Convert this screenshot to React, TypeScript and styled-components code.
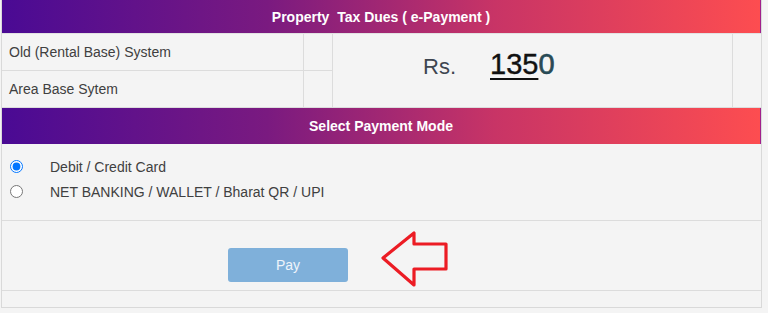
import React from "react";
import styled, { createGlobalStyle } from "styled-components";

const Global = createGlobalStyle`
  html, body { margin: 0; padding: 0; background: #f4f4f4; }
  body { font-family: "Liberation Sans", Arial, sans-serif; }
  * { box-sizing: border-box; }
`;

const Panel = styled.div`
  margin-left: 1px;
  width: 761px;
  border: 1px solid #d9d9d9;
  border-top: none;
  background: #f4f4f4;
`;

const Banner = styled.div<{ $h: number }>`
  height: ${(p) => p.$h}px;
  display: flex;
  align-items: center;
  justify-content: center;
  background: linear-gradient(90deg, #4a0a94 0%, #7a1a80 35%, #c83466 65%, #fd4d50 100%);
  border-right: 1px solid #a0208c;
  color: #ffffff;
  font-weight: bold;
  font-size: 14px;
`;

const DuesGrid = styled.div`
  display: grid;
  grid-template-columns: 302px 29px 400px 28px;
  grid-template-rows: 37px 37px;
  border-top: 1px solid #e2e2e2;
`;

const Cell = styled.div<{ $col: number; $row: string; $last?: boolean }>`
  grid-column: ${(p) => p.$col};
  grid-row: ${(p) => p.$row};
  border-right: ${(p) => (p.$last ? "none" : "1px solid #dcdcdc")};
  border-bottom: 1px solid #dcdcdc;
  display: flex;
  align-items: center;
  padding-left: 7px;
  font-size: 14px;
  color: #404040;
`;

const AmountCell = styled(Cell)`
  padding-left: 90px;
  padding-bottom: 13px;
`;

const Rs = styled.span`
  font-size: 22px;
  color: #3e4650;
  margin-top: 6px;
  width: 67px;
`;

const Amount = styled.span`
  font-size: 29px;
  color: #111;
  -webkit-text-stroke: 0.4px #111;
`;

const Under = styled.span`
  text-decoration: underline;
  text-decoration-thickness: 2px;
  text-underline-offset: 4px;
`;

const Tail = styled.span`
  color: #284a55;
  -webkit-text-stroke: 0.6px #284a55;
`;

const Options = styled.div`
  height: 77px;
  border-bottom: 1px solid #dcdcdc;
  padding: 16px 0 0 8px;
  display: flex;
  flex-direction: column;
  gap: 12px;
`;

const Option = styled.label`
  display: flex;
  align-items: center;
  height: 13px;
  font-size: 14px;
  color: #404040;
`;

const Radio = styled.input`
  margin: 0 27px 0 0;
  width: 13px;
  height: 13px;
`;

const PayRow = styled.div`
  height: 70px;
  border-bottom: 1px solid #dcdcdc;
  display: flex;
  align-items: flex-start;
  padding-left: 226px;
`;

const PayButton = styled.button`
  margin-top: 27px;
  width: 120px;
  height: 34px;
  border: none;
  border-radius: 3px;
  background: #7fb0da;
  color: #eef4fa;
  font-family: "Liberation Sans", Arial, sans-serif;
  font-size: 14px;
`;

const Arrow = styled.svg`
  margin-top: 9px;
  margin-left: 32px;
`;

const Footer = styled.div`
  height: 16px;
`;

export default function App() {
  return (
    <>
      <Global />
      <Panel>
        <Banner $h={33}>Property&nbsp; Tax Dues ( e-Payment )</Banner>
        <DuesGrid>
          <Cell $col={1} $row="1">Old (Rental Base) System</Cell>
          <Cell $col={2} $row="1" />
          <AmountCell $col={3} $row="1 / span 2">
            <Rs>Rs.</Rs>
            <Amount>
              <Under>135</Under>
              <Tail>0</Tail>
            </Amount>
          </AmountCell>
          <Cell $col={4} $row="1 / span 2" $last />
          <Cell $col={1} $row="2">Area Base Sytem</Cell>
          <Cell $col={2} $row="2" />
        </DuesGrid>
        <Banner $h={36}>Select Payment Mode</Banner>
        <Options>
          <Option>
            <Radio type="radio" name="mode" defaultChecked />
            Debit / Credit Card
          </Option>
          <Option>
            <Radio type="radio" name="mode" />
            NET BANKING / WALLET / Bharat QR / UPI
          </Option>
        </Options>
        <PayRow>
          <PayButton>Pay</PayButton>
          <Arrow width="70" height="58" viewBox="0 0 70 58">
            <polygon
              points="3,28 34,3 34,14 66,14 66,39 34,39 34,55"
              fill="none"
              stroke="#ec1c24"
              strokeWidth="3.2"
              strokeLinejoin="round"
            />
          </Arrow>
        </PayRow>
        <Footer />
      </Panel>
    </>
  );
}
